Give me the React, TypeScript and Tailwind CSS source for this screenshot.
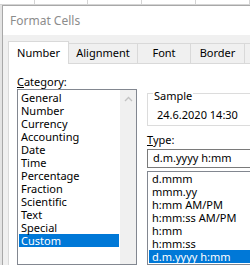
const categories = [
  "General",
  "Number",
  "Currency",
  "Accounting",
  "Date",
  "Time",
  "Percentage",
  "Fraction",
  "Scientific",
  "Text",
  "Special",
  "Custom",
]

const types = [
  "d.mmm",
  "mmm.yy",
  "h:mm AM/PM",
  "h:mm:ss AM/PM",
  "h:mm",
  "h:mm:ss",
  "d.m.yyyy h:mm",
]

const tabs = [
  { name: "Alignment", w: "w-[69px]" },
  { name: "Font", w: "w-[53px]" },
  { name: "Border", w: "w-[54px]" },
]

export default function App() {
  return (
    <div className="flex h-[265px] w-[250px] flex-col overflow-hidden bg-[#e4e4e4] font-['Noto_Sans',sans-serif] text-[11px] text-black">
      {/* sheet behind the dialog */}
      <div className="flex h-[5px] shrink-0 bg-white">
        <div className="w-[41px] border-r border-b border-[#d4d4d4]" />
        <div className="w-[64px] border-r border-b border-[#d4d4d4]" />
        <div className="w-[64px] border-r border-b border-[#d4d4d4]" />
        <div className="w-[64px] border-r border-b border-[#d4d4d4]" />
        <div className="w-[64px] border-r border-b border-[#d4d4d4]" />
      </div>

      {/* Dialog */}
      <div className="ml-[2px] flex w-[420px] flex-1 flex-col border-l border-t border-[#a8a8a8]">
        {/* Title bar */}
        <div className="flex h-[29px] shrink-0 items-center bg-white pl-[7px] pt-[1px] text-[12px] text-[#8c8c8c]">
          Format Cells
        </div>

        {/* Body */}
        <div className="flex flex-1 flex-col bg-[#f0f0f0] pl-[5px]">
          {/* Tabs */}
          <div className="flex h-[28px] shrink-0 items-end">
            <div className="relative z-10 -mb-px flex h-[23px] w-[61px] items-center justify-center border border-b-0 border-[#d9d9d9] bg-white pt-[1px]">
              Number
            </div>
            {tabs.map((t) => (
              <div
                key={t.name}
                className={`flex h-[20px] items-center justify-center border-t border-r border-[#d9d9d9] bg-[#f0f0f0] ${t.w}`}
              >
                {t.name}
              </div>
            ))}
            {/* next tab, off the edge */}
            <div className="h-[20px] w-[60px] border-t border-r border-[#d9d9d9] bg-[#f0f0f0]" />
          </div>

          {/* Panel */}
          <div className="flex flex-1 border-t border-l border-[#d9d9d9] bg-white pl-[8px] pt-[11px]">
            {/* Category */}
            <div className="flex w-[120px] flex-col">
              <div className="h-[14px] leading-[14px]">
                <u>C</u>ategory:
              </div>
              <div className="flex flex-1 border border-[#828790]">
                <div className="flex-1 p-[1px]">
                  {categories.map((c) => (
                    <div
                      key={c}
                      className={`h-[13px] pl-[2px] leading-[13px] ${
                        c === "Custom" ? "bg-[#0078d7] text-white" : ""
                      }`}
                    >
                      {c}
                    </div>
                  ))}
                </div>
                <div className="w-[16px] bg-[#f0f0f0]">
                  <div className="flex h-[17px] items-center justify-center">
                    <svg width="9" height="6" viewBox="0 0 9 6">
                      <path d="M1 5 L4.5 1.5 L8 5" fill="none" stroke="#c2c2c2" strokeWidth="1.3" />
                    </svg>
                  </div>
                </div>
              </div>
            </div>

            {/* Sample + Type */}
            <div className="ml-[10px] flex flex-1 flex-col">
              <div className="relative mt-[18px] h-[33px] border border-[#dcdcdc] pl-[9px] pt-[14px]">
                <div className="absolute -top-[5px] left-[5px] bg-white px-[1px] leading-[14px]">
                  Sample
                </div>
                <div className="leading-[14px]">24.6.2020 14:30</div>
              </div>

              <div className="mt-[7px] h-[14px] leading-[14px]">
                <u>T</u>ype:
              </div>
              <div className="mt-[2px] flex h-[19px] items-center border border-[#7a7a7a] pl-[5px]">
                d.m.yyyy h:mm
              </div>

              <div className="mt-[3px] flex-1 border border-[#828790] p-[1px] pt-0">
                {types.map((t, i) => (
                  <div
                    key={i}
                    className={`h-[13px] pl-[3px] leading-[13px] ${
                      i === 6 ? "bg-[#0078d7] text-white" : ""
                    }`}
                  >
                    {t}
                  </div>
                ))}
              </div>
            </div>
          </div>
        </div>
      </div>
    </div>
  )
}
